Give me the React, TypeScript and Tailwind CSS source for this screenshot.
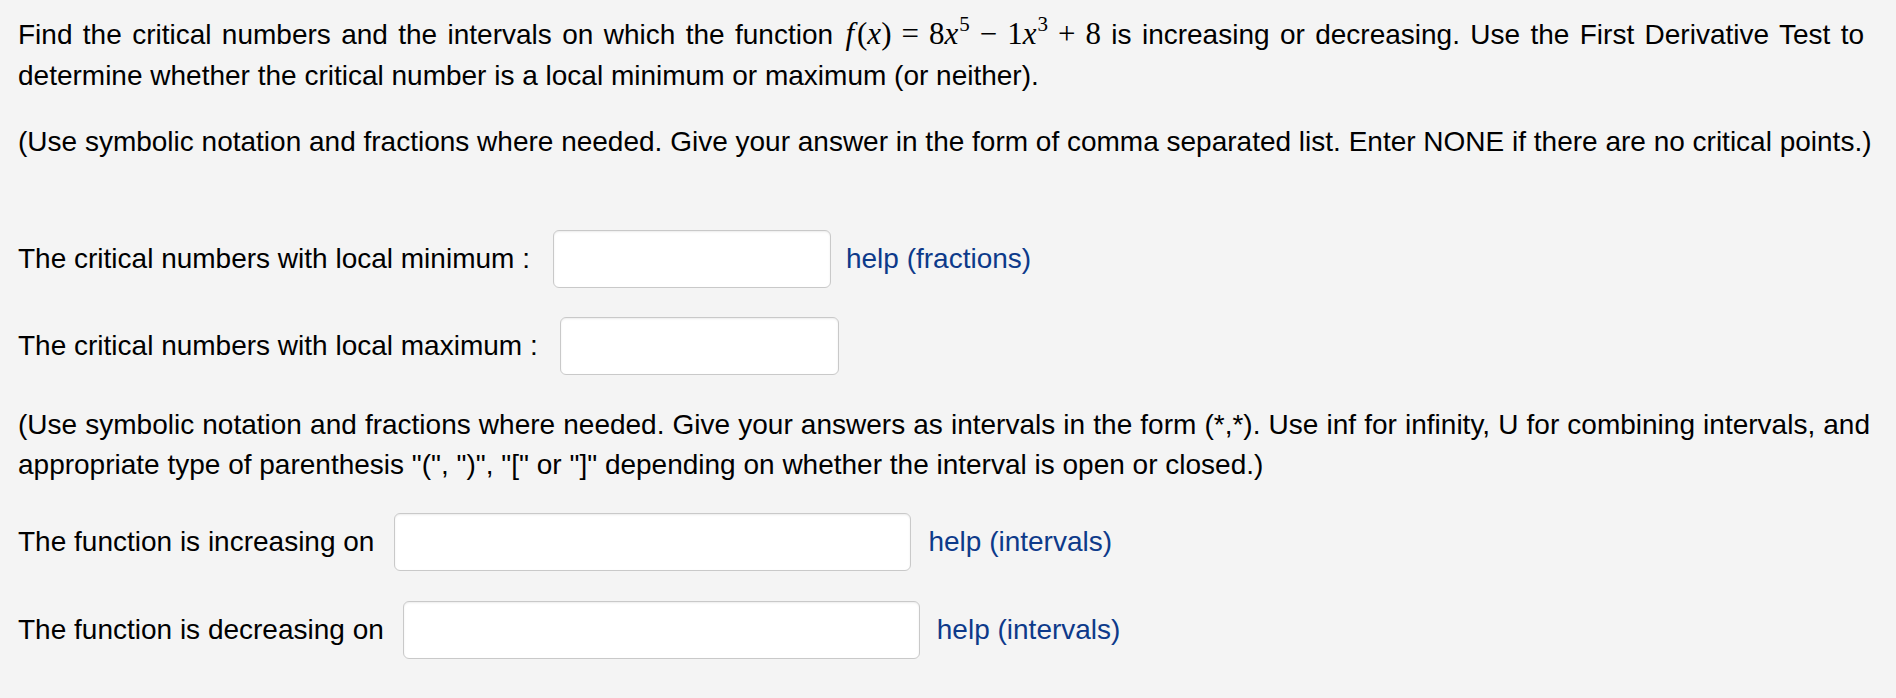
import React from "react"

const sans = { fontFamily: '"Liberation Sans", Arial, Helvetica, sans-serif' }

function Field({ className = "" }: { className?: string }) {
  return (
    <input
      type="text"
      className={
        "h-[58px] rounded-[6px] border border-[#c9c9c9] bg-white px-2 shadow-[inset_0_1px_2px_rgba(0,0,0,0.08)] outline-none " +
        className
      }
    />
  )
}

function Help({ children }: { children: React.ReactNode }) {
  return <a className="cursor-pointer text-[#0d3a8a]">{children}</a>
}

function Math() {
  return (
    <span className="whitespace-nowrap font-['Liberation_Serif',serif] text-[31px] leading-none">
      <i className="mr-[3px] ml-[2px]">f</i>(<i>x</i>)<span className="mx-[10px]">=</span>8<i>x</i>
      <sup className="relative -top-[13px] ml-[1px] align-baseline text-[21px] leading-none">5</sup>
      <span className="mx-[10px]">−</span>1<i>x</i>
      <sup className="relative -top-[13px] ml-[1px] align-baseline text-[21px] leading-none">3</sup>
      <span className="mx-[10px]">+</span>8
    </span>
  )
}

export default function App() {
  return (
    <div
      className="min-h-[698px] bg-[#f4f4f4] pl-[18px] pr-[22px] pt-[14px] text-[28px] text-black"
      style={sans}
    >
      <p className="mr-[10px] text-justify leading-[41px]">
        Find the critical numbers and the intervals on which the function <Math /> is increasing or
        decreasing. Use the First Derivative Test to determine whether the critical number is a local
        minimum or maximum (or neither).
      </p>

      <p className="mt-[25px] text-justify leading-[41px]">
        (Use symbolic notation and fractions where needed. Give your answer in the form of comma separated
        list. Enter NONE if there are no critical points.)
      </p>

      <div className="mt-[68px] flex items-center">
        <span>The critical numbers with local minimum :</span>
        <Field className="ml-[23px] w-[278px] border-[#7fb0e8] shadow-[0_0_6px_2px_rgba(120,170,230,0.35)]" />
        <span className="ml-[15px]">
          <Help>help (fractions)</Help>
        </span>
      </div>

      <div className="mt-[29px] flex items-center">
        <span>The critical numbers with local maximum :</span>
        <Field className="ml-[22px] w-[279px]" />
      </div>

      <p className="mr-[4px] mt-[30px] text-justify leading-[40px]">
        (Use symbolic notation and fractions where needed. Give your answers as intervals in the form (*,*).
        Use inf for infinity, U for combining intervals, and appropriate type of parenthesis "(", ")", "["
        or "]" depending on whether the interval is open or closed.)
      </p>

      <div className="mt-[28px] flex items-center">
        <span>The function is increasing on</span>
        <Field className="ml-[20px] w-[517px]" />
        <span className="ml-[17px]">
          <Help>help (intervals)</Help>
        </span>
      </div>

      <div className="mt-[30px] flex items-center">
        <span>The function is decreasing on</span>
        <Field className="ml-[19px] w-[517px]" />
        <span className="ml-[17px]">
          <Help>help (intervals)</Help>
        </span>
      </div>
    </div>
  )
}
